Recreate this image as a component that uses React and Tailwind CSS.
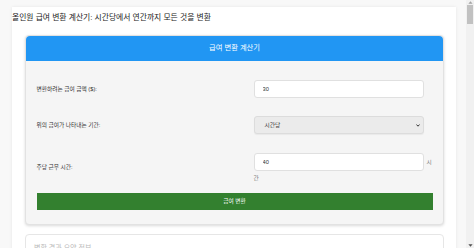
import React from "react";

const font = { fontFamily: '"Liberation Sans", "Noto Sans CJK KR", sans-serif' };

const Row = ({ label, children, className = "" }) => (
  <div className={`flex items-center ${className}`}>
    <div className="flex-1 text-[5.7px] text-[#333]">{label}</div>
    <div className="w-[179px] text-[5.7px] text-[#666] leading-[8px]">{children}</div>
  </div>
);

const Scrollbar = () => (
  <div className="flex w-[8px] shrink-0 flex-col items-center bg-[#f1f1f1]">
    <svg className="mt-[1px]" width="5" height="3" viewBox="0 0 5 3">
      <path d="M2.5 0.3 L4.6 2.7 L0.4 2.7 Z" fill="#a3a3a3" />
    </svg>
    <div className="mt-[1px] h-[19px] w-[6px] bg-[#c1c1c1]" />
    <div className="flex-1" />
    <svg className="mb-[1px]" width="5" height="3" viewBox="0 0 5 3">
      <path d="M0.4 0.3 L4.6 0.3 L2.5 2.7 Z" fill="#505050" />
    </svg>
  </div>
);

const App = () => {
  return (
    <div className="flex h-[248px] w-full overflow-hidden bg-[#f8f8f8]" style={font}>
      <div className="flex-1 pt-[7px]">
        <div className="ml-[12px] w-[444px] bg-white shadow-[0_0_3px_rgba(0,0,0,0.08)] pb-[20px]">
          <h1 className="pt-[5px] text-[7.8px] leading-[12px] text-[#222]">
            올인원 급여 변환 계산기: 시간당에서 연간까지 모든 것을 변환
          </h1>

          {/* calculator */}
          <div className="ml-[13px] mt-[11px] w-[419px] rounded-[4px] border border-[#e2e2e2] bg-[#f5f5f5] shadow-[0_1px_3px_rgba(0,0,0,0.15)]">
            <div className="flex h-[25px] items-center justify-center rounded-t-[4px] bg-[#2196f3] text-[7.3px] text-white">
              급여 변환 계산기
            </div>

            <div className="px-[10.5px] pt-[19px] pb-[14px]">
              <Row label="변환하려는 급여 금액 ($):">
                <input
                  readOnly
                  value="30"
                  className="h-[18px] w-[95%] rounded-[3px] border border-[#e0e0e0] bg-white px-[8px] text-[5.7px] text-[#333] outline-none"
                />
              </Row>

              <Row label="위의 급여가 나타내는 기간:" className="mt-[18px]">
                <div className="relative h-[18px] w-[95%] rounded-[3px] border border-[#dcdcdc] bg-[#ebebeb] shadow-[0_1px_1px_rgba(0,0,0,0.05)]">
                  <div className="flex h-full items-center pl-[10px] text-[#333]">시간당</div>
                  <svg className="absolute right-[3px] top-[7px]" width="4" height="3" viewBox="0 0 4 3">
                    <path d="M0.4 0.5 L2 2.2 L3.6 0.5" fill="none" stroke="#333" strokeWidth="1" />
                  </svg>
                </div>
              </Row>

              <Row label="주당 근무 시간:" className="mt-[19px]">
                <input
                  readOnly
                  value="40"
                  className="inline-block h-[18px] w-[95%] rounded-[3px] border border-[#e0e0e0] bg-white px-[8px] align-top text-[5.7px] text-[#333] outline-none"
                />
                <span className="ml-[3px] inline-block pt-[5px] align-top text-[#777]">시</span>
                <span className="block pt-[3px] text-[#777]">간</span>
              </Row>

              <button className="mt-[11px] flex h-[17px] w-full items-center justify-center bg-[#33802f] text-[5.7px] text-white">
                급여 변환
              </button>
            </div>
          </div>

          {/* results */}
          <div className="ml-[13px] mt-[9px] h-[40px] w-[419px] rounded-[4px] border border-[#e6e6e6] bg-white px-[8px] pt-[8px] text-[7px] text-[#bbb]">
            변환 결과 요약 정보
          </div>
        </div>
      </div>
      <Scrollbar />
    </div>
  );
};

export default App;
